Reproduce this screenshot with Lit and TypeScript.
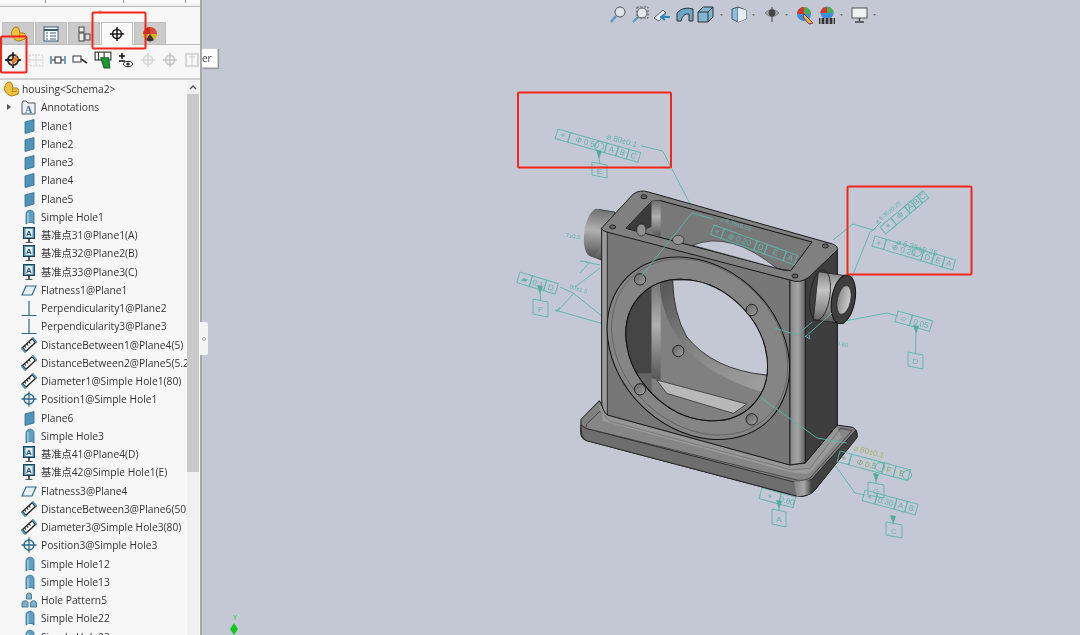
import { LitElement, html, css, svg } from "lit";
import { customElement } from "lit/decorators.js";

type Kind = "plane" | "hole" | "datum" | "flat" | "perp" | "dist" | "pos" | "pattern";

const rows: [Kind, string][] = [
  ["plane", "Plane1"], ["plane", "Plane2"], ["plane", "Plane3"], ["plane", "Plane4"], ["plane", "Plane5"],
  ["hole", "Simple Hole1"],
  ["datum", "基准点31@Plane1(A)"], ["datum", "基准点32@Plane2(B)"], ["datum", "基准点33@Plane3(C)"],
  ["flat", "Flatness1@Plane1"], ["perp", "Perpendicularity1@Plane2"], ["perp", "Perpendicularity3@Plane3"],
  ["dist", "DistanceBetween1@Plane4(5)"], ["dist", "DistanceBetween2@Plane5(5.25)"], ["dist", "Diameter1@Simple Hole1(80)"],
  ["pos", "Position1@Simple Hole1"], ["plane", "Plane6"], ["hole", "Simple Hole3"],
  ["datum", "基准点41@Plane4(D)"], ["datum", "基准点42@Simple Hole1(E)"], ["flat", "Flatness3@Plane4"],
  ["dist", "DistanceBetween3@Plane6(50)"], ["dist", "Diameter3@Simple Hole3(80)"], ["pos", "Position3@Simple Hole3"],
  ["hole", "Simple Hole12"], ["hole", "Simple Hole13"], ["pattern", "Hole Pattern5"], ["hole", "Simple Hole22"], ["hole", "Simple Hole23"],
];

const yellow = svg`<path d="M3 3 C4 1 8 0 9 3 L10 7 L14 7 C16 8 16 11 15 13 L9 15 C6 15 3 12 1.500 9 C1 7 2 5 3 3Z" fill="#f0c040" stroke="#a87c18" stroke-width="1"/><path d="M10 7 L9 11 L14 10" stroke="#b08820" fill="none"/>`;

function kindIcon(k: Kind) {
  const blue = "#4f94b8";
  const dark = "#2f6a8a";
  switch (k) {
    case "plane":
      return svg`<path d="M4 4 L13 1.5 L13 13 L4 15.5Z" fill="${blue}" stroke="${dark}" stroke-width=".8"/>`;
    case "hole":
      return svg`<path d="M5 15 L5 5 C5 0 13 0 13 5 L13 15 L11 13.5 L7 13.5Z" fill="#5f9fc0" stroke="${dark}" stroke-width=".8"/><path d="M7 14 L7 4" stroke="#cfe4ee"/>`;
    case "datum":
      return svg`<rect x="2.5" y=".5" width="11" height="11" fill="#4f94b8" stroke="#23404f"/><rect x="4.5" y="2" width="7" height="8" fill="#e8f0f4"/><text x="8" y="9" class="datum-a">A</text><path d="M8 11.5 L8 15 M4.5 16 L11.5 16" stroke="#222" stroke-width="1.5"/>`;
    case "flat":
      return svg`<path d="M5 4 L15 4 L11 13 L1 13Z" fill="#e6eff4" stroke="${dark}" stroke-width="1.2"/>`;
    case "perp":
      return svg`<path d="M8 1 L8 15 M.5 15.5 L15.5 15.5" stroke="${dark}" stroke-width="1.2" fill="none"/>`;
    case "dist":
      return svg`<g transform="rotate(-42 8 8)"><rect x="1.500" y="5.500" width="13" height="5" fill="#fff" stroke="#222" stroke-width="1.4"/><path d="M4 6 v2 M7 6 v2 M10 6 v2" stroke="#222"/><path d="M0.500 4.500 L0.500 11.500 M15.500 4.500 L15.500 11.500" stroke="${blue}" stroke-width="2"/></g>`;
    case "pos":
      return svg`<circle cx="8" cy="8" r="5" fill="#eaf2f6" stroke="${dark}" stroke-width="1.4"/><path d="M8 .5 L8 15.5 M.5 8 L15.5 8" stroke="${dark}" stroke-width="1.3"/>`;
    case "pattern":
      return svg`<g fill="#7fb0c8" stroke="${dark}" stroke-width=".8"><path d="M5.5 7 L5.5 3 C5.5 .5 10.5 .5 10.5 3 L10.5 7Z"/><path d="M1 15 L1 11 C1 8 7 8 7 11 L7 15Z"/><path d="M9.5 15 L9.5 11 C9.5 8 15.5 8 15.5 11 L15.5 15Z"/></g>`;
  }
}

const line = (pts: string, cls = "t") => svg`<polyline class="${cls}" points="${pts}"/>`;

function frame(x: number, y: number, angle: number, h: number, cells: [number, string][], yellowish = false) {
  let cx = 0;
  return svg`<g transform="translate(${x} ${y}) rotate(${angle})" class="${yellowish ? "yl" : ""}">
    ${cells.map(([w, label]) => {
      const g = svg`<rect class="t" x="${cx}" y="0" width="${w}" height="${h}"/><text class="gd" x="${cx + w / 2}" y="${h - 2.5}">${label}</text>`;
      cx += w;
      return g;
    })}
  </g>`;
}

function datumBox(x: number, y: number, w: number, h: number, label: string, triX?: number, triY?: number) {
  return svg`<g>
    <path class="t" d="M${x} ${y} L${x + w} ${y + 3} L${x + w} ${y + h + 1} L${x} ${y + h - 2}Z"/>
    <text class="gd" x="${x + w / 2}" y="${y + h / 2 + 4}">${label}</text>
    ${triX !== undefined ? svg`<path d="M${triX - 3} ${triY} L${triX + 3} ${(triY as number) + 1} L${triX} ${(triY as number) + 9}Z" fill="#52ab9f"/><path class="t" d="M${triX} ${(triY as number) + 6} L${x + w / 2} ${y + 1}"/>` : ""}
  </g>`;
}

function model() {
  const holes: [number, number][] = [[210, 298], [545, 390], [325, 513], [210, 628], [545, 718]];
  const topHoles: [number, number][] = [[222, 50], [128, 141], [766, 198], [675, 288]];
  return svg`<g transform="translate(570 180) scale(.33333)" stroke-linejoin="round">
    <!-- left boss -->
    <path d="M85 88 L135 96 L100 242 L58 226Z" fill="url(#boss)" stroke="#222" stroke-width="2"/>
    <ellipse cx="72" cy="158" rx="29" ry="72" transform="rotate(8 72 158)" fill="url(#boss)" stroke="none"/>
    <!-- base -->
    <path d="M33 718 L88 662 L112 705 L660 855 L705 850 L800 735 L848 742 Q866 752 860 772 L735 930 Q712 954 678 948 L50 782 Q32 776 32 758Z" fill="#7f7f7f" stroke="#1f1f1f" stroke-width="3"/>
    <path d="M33 735 L48 745 L680 908 L680 948 L50 782 Q32 776 33 735Z" fill="#6e6e6e" stroke="#222" stroke-width="2.5"/>
    <path d="M50 732 L90 694 L120 724 L665 870 L720 865 L812 745 L846 752 L722 892 Q705 904 680 900 L48 745Z" fill="#868686" stroke="#2a2a2a" stroke-width="2"/>
    <path d="M85 668 L112 705 L660 855 L705 850 L800 738 L815 770 L722 878 Q700 884 660 876 L100 724Z" fill="#b4b4b4" opacity=".45"/>
    <path d="M858 750 L725 898 Q705 910 680 906 L680 948 Q712 954 735 930 L862 772 Z" fill="#414141" stroke="#222" stroke-width="2.5"/>
    <path d="M672 905 L722 900 L722 942 L680 950Z" fill="url(#corner)"/>
    <!-- right dark side -->
    <path d="M705 298 L802 208 L802 735 L705 850Z" fill="#3e3e3e" stroke="#111" stroke-width="3"/>
    <!-- front face -->
    <path d="M95 145 L660 300 L660 855 L112 705 Q95 690 95 660Z" fill="#777" stroke="#1a1a1a" stroke-width="3"/>
    <path d="M95 145 L112 155 L112 705 Q95 690 95 660Z" fill="#999" stroke="#1a1a1a" stroke-width="2.5"/>
    <path d="M660 298 L706 298 L706 848 L660 855Z" fill="url(#cornerR)" stroke="#1a1a1a" stroke-width="3"/>
    <!-- top -->
    <path d="M94 145 L190 42 Q210 28 235 36 L788 192 Q806 200 802 210 L716 292 Q690 312 660 300 L110 156Q96 152 94 145Z" fill="#808080" stroke="#1a1a1a" stroke-width="3"/>
    <path d="M168 145 L245 64 L272 62 L726 186 L662 272 L640 270Z" fill="#787878" stroke="#111" stroke-width="3"/>
    <path d="M168 145 L245 64 L245 140 L210 155Z" fill="#3a3a3a"/>
    <path d="M245 64 L272 62 L272 170 L245 158Z" fill="url(#boss)"/>
    <path d="M368 196 Q480 150 622 266 L662 272 L640 270Z" fill="#c4c8d4" stroke="#222" stroke-width="2"/>
    <ellipse cx="214" cy="150" rx="14" ry="18" fill="#8f8f8f" stroke="#222" stroke-width="2"/>
    <ellipse cx="325" cy="180" rx="17" ry="14" fill="#939393" stroke="#222" stroke-width="2"/>
    ${topHoles.map(([x, y]) => svg`<ellipse cx="${x}" cy="${y}" rx="9" ry="6" fill="#666" stroke="#111" stroke-width="2.5"/>`)}
    <!-- ring -->
    <ellipse cx="385" cy="505" rx="302" ry="242" transform="rotate(45 385 505)" fill="#858585" stroke="#111" stroke-width="3"/>
    <ellipse cx="389" cy="501" rx="292" ry="233" transform="rotate(45 389 501)" fill="none" stroke="#444" stroke-width="1.5"/>
    <ellipse cx="380" cy="510" rx="235" ry="187" transform="rotate(45 380 510)" fill="#666" stroke="#111" stroke-width="3"/>
    <!-- inside -->
    <clipPath id="inner"><ellipse cx="380" cy="510" rx="235" ry="187" transform="rotate(45 380 510)"/></clipPath>
    <g clip-path="url(#inner)">
      <rect x="130" y="280" width="120" height="300" fill="#454545"/>
      <rect x="245" y="280" width="360" height="460" fill="#808080"/>
      <path d="M245 300 L272 300 L272 600 L245 595Z" fill="url(#boss)"/>
      <path d="M270 300 L310 300 Q310 500 590 590 L590 640 Q300 560 270 330Z" fill="url(#ringIn)"/>
      <path d="M260 600 L530 672 L490 700 L290 640Z" fill="#b8b8b8" stroke="#222" stroke-width="2"/>
      <path d="M308 300 L620 300 L620 560 L590 585 Q430 570 350 470 Q310 400 308 300Z" fill="#c4c8d4" stroke="#222" stroke-width="2.5"/>
    </g>
    <ellipse cx="380" cy="510" rx="235" ry="187" transform="rotate(45 380 510)" fill="none" stroke="#111" stroke-width="3"/>
    ${holes.map(([x, y]) => svg`<circle cx="${x}" cy="${y}" r="17" fill="url(#hole)" stroke="#111" stroke-width="2.5"/>`)}
    <!-- right boss -->
    <path d="M745 275 L832 288 L822 430 L730 420Z" fill="url(#bossR)" stroke="#222" stroke-width="2.5"/>
    <ellipse cx="750" cy="345" rx="30" ry="76" transform="rotate(8 750 345)" fill="none" stroke="#222" stroke-width="2.5"/>
    <ellipse cx="820" cy="358" rx="35" ry="74" transform="rotate(10 820 358)" fill="#3e3e3e" stroke="#111" stroke-width="3"/>
    <ellipse cx="822" cy="360" rx="20" ry="44" transform="rotate(12 822 360)" fill="url(#bore)" stroke="#222" stroke-width="2"/>
  </g>`;
}

function annotations() {
  return svg`
    ${line("640.7,145.7 662.7,151 688,200 700,222")}
    ${frame(558, 129, 16, 10, [[13, "⌖"], [38, "Φ 0.50"], [12, "A"], [11, "B"], [12, "C"]])}
    <circle class="t" cx="599" cy="146" r="4.5"/>
    <text class="gd" x="621" y="143" transform="rotate(16 621 143)">⌀ 80±0.1</text>
    ${datumBox(592, 162, 15, 15, "E", 599, 150)}

    ${line("833,240 853,224 873,230 881,222")}
    ${line("850,282 870,232 876,228")}
    ${frame(875, 236, 16.6, 10.5, [[12, "⌖"], [39, "⊕ 0.20"], [11, "D"], [11, "E"], [11, "A"]])}
    <circle class="t" cx="917" cy="252" r="4.5"/>
    <text class="gd" x="916" y="250" transform="rotate(16.6 916 250)">⌀ 6.35±0.25</text>
    ${frame(880, 227, -40, 9, [[14, "⌖"], [18, "Φ"], [8, "A"], [8, "B"], [8, "C"]])}
    <text class="gd tiny" x="889" y="214" transform="rotate(-40 889 214)">⌀ 6.35±0.25</text>

    ${line("845,321 887,313 898,316")}
    ${frame(898, 311, 16, 11, [[15, "▱"], [21, "0.05"]])}
    ${datumBox(908, 352, 15, 16, "D", 916, 325)}
    ${line("805,338 827,342")}
    <text class="gd tiny" x="840" y="346" transform="rotate(10 840 346)">⌀0.60</text>

    ${frame(520, 272, 17, 11, [[13, "▰"], [15, "0.1"], [12, "D"]])}
    ${datumBox(533, 299, 15, 17, "F", 540, 285)}
    ${line("560,287 573,293 617,328")}
    ${line("555,310 607,325")}
    ${line("557,312 574,293")}
    ${line("580,273 590,262")}
    ${line("585,262 600,265")}
    ${line("575,287 600,268")}
    <path d="M580 261 l8 1 M556 312 l4 -5" class="t"/>
    <text class="gd tiny" x="578" y="291" transform="rotate(17 578 291)">80±1.5</text>
    <text class="gd tiny" x="572" y="238" transform="rotate(8 572 238)">.7±0.5</text>

    ${frame(762, 488, 15, 11, [[20, "⌖"], [15, "0.80"]])}
    ${datumBox(772, 509, 14, 17, "A", 779, 500)}
  `;
}

function overModel() {
  return svg`
    ${line("642,275 692,213 713,219")}
    ${frame(714, 225, 20, 10, [[11, "⌖"], [35, "⊕ 0.20"], [11, "D"], [20, "E"], [12, "A"]])}
    <text class="gd tiny" x="735" y="226" transform="rotate(18 735 226)">⌀ 6.35±0.25</text>
    ${line("775,328 797,335 812,322")}
    ${line("805,337 832,313")}
    ${line("760,397 817,438 847,443")}
    <path class="t" d="M805 336 l5 3 l-1 -4"/>

    ${frame(840, 451, 15, 11, [[12, "⌖"], [34, "Φ 0.5"], [12, "F"], [15, "E"]], true)}
    <circle class="t" cx="880" cy="467" r="4.5"/><circle class="t" cx="907" cy="475" r="4.5"/>
    <text class="gd yt" x="868" y="454" transform="rotate(15 868 454)">⌀ 80±0.1</text>
    ${datumBox(868, 482, 16, 15, "G", 876, 473)}
    ${line("835,465 855,493 865,495")}
    ${frame(865, 490, 15, 11, [[13, "⌖"], [20, "0.30"], [11, "A"], [11, "B"]])}
    ${datumBox(886, 522, 16, 15, "C", 893, 515)}
  `;
}

@customElement("app-root")
export class AppRoot extends LitElement {
  static styles = css`
    :host { display: block; width: 1080px; height: 635px; overflow: hidden; position: relative; font-family: "Open Sans", "Noto Sans CJK SC", sans-serif; color: #333; }
    .shot { width: 1080px; height: 635px; position: relative; filter: blur(.3px); }
    .page { display: flex; width: 1080px; height: 635px; }
    .panel { width: 200px; flex: none; background: #f7f7f7; border-right: 2px solid #a9a9a9; display: flex; flex-direction: column; box-sizing: content-box; position: relative; z-index: 2; }
    .strip { height: 6px; border-bottom: 1px solid #b9b9b9; background: linear-gradient(#fff, #efefef); display: flex; }
    .strip span { flex: none; border-right: 1px solid #9c9c9c; height: 3px; }
    .strip .a { width: 45px; }
    .strip .b { width: 77px; }
    .strip .c { width: 61px; }
    .handle { height: 15px; display: flex; justify-content: center; align-items: flex-start; padding-top: 3px; box-sizing: border-box; }
    .handle i { width: 4px; height: 4px; border-radius: 50%; background: #c8c8c8; }
    .tabs { display: flex; gap: 1px; height: 22px; padding-left: 2px; border-bottom: 1px solid #bbb; }
    .tab { width: 32px; height: 22px; background: #cbcbcb; display: flex; align-items: center; justify-content: center; border: 1px solid #bdbdbd; border-bottom: 0; box-sizing: border-box; }
    .tab.on { background: #fafafa; height: 23px; z-index: 1; }
    .tools { height: 35px; display: flex; align-items: center; padding: 0 0 4px 2px; gap: 0; border-bottom: 2px solid #d2d2d2; box-sizing: border-box; }
    .tool { width: 22.4px; height: 22px; display: flex; align-items: center; justify-content: center; flex: none; }
    .tree { flex: 1; display: flex; min-height: 0; overflow: hidden; }
    .list { width: 187px; flex: none; overflow: hidden; }
    .scroll { width: 12px; background: #f0f0f0; display: flex; flex-direction: column; }
    .up { height: 14px; display: flex; align-items: center; justify-content: center; }
    .thumb { height: 378px; background: #c9c9c9; }
    .row { height: 18.25px; display: flex; align-items: center; white-space: nowrap; font-size: 10.25px; line-height: 18px; color: #333; }
    .ic { width: 16px; height: 16px; flex: none; margin-left: 21px; margin-right: 4px; }
    .row.root .ic { margin-left: 3px; margin-right: 3px; }
    .arrow { width: 0; height: 0; border-left: 4px solid #555; border-top: 3.5px solid transparent; border-bottom: 3.5px solid transparent; margin-left: 7px; margin-right: -11px; flex: none; }
    .grip { position: absolute; left: 200px; top: 322px; width: 8px; height: 33px; background: #f4f4f4; border-radius: 0 2px 2px 0; display: flex; align-items: center; justify-content: center; }
    .grip i { width: 4px; height: 4px; border-radius: 50%; border: 1px solid #aaa; box-sizing: border-box; }
    .tip { position: absolute; left: 202px; top: 48px; width: 16px; height: 20px; background: #fff; border: 1px solid #ccc; border-left: 0; box-sizing: border-box; font-size: 10px; display: flex; align-items: center; color: #444; box-shadow: 1px 1px 1px #999; }
    .view { flex: 1; background: #c4c8d4; position: relative; min-width: 0; }
    .view svg.canvas { position: absolute; inset: 0; width: 100%; height: 100%; }
    .marks { position: absolute; left: 0; top: 0; pointer-events: none; z-index: 3; }
    .t { fill: none; stroke: #5bb5aa; stroke-width: 1; opacity: .9; }
    .gd { font: 8px "Liberation Sans", sans-serif; fill: #62b2aa; text-anchor: middle; }
    .tiny { font-size: 6px; }
    .yt { fill: #a8b06a; }
    .yl .gd { fill: #7fa870; }
    .datum-a { font: bold 8px "Liberation Sans", sans-serif; fill: #23506a; text-anchor: middle; }
    .annot { font: bold 10px "Liberation Serif", serif; fill: #3d6fa8; text-anchor: middle; }
    .red { fill: none; stroke: #f3261a; stroke-width: 2; }
    .axis { font: 7px "Liberation Sans", sans-serif; fill: #39d24a; text-anchor: middle; }
  `;

  private ic(inner: unknown, w = 16, h = 16, vb = "0 0 16 16") {
    return html`<svg width="${w}" height="${h}" viewBox="${vb}" fill="none">${inner}</svg>`;
  }

  render() {
    const target = (c: string) => svg`<circle cx="8" cy="8" r="4.5" stroke="${c}" stroke-width="1.6"/><path d="M8 1 V15 M1 8 H15" stroke="${c}" stroke-width="1.6"/>`;
    return html`
      <div class="shot">
      <div class="page">
        <div class="panel">
          <div class="strip"><span class="a"></span><span class="b"></span><span class="c"></span></div>
          <div class="handle"><i></i></div>
          <div class="tabs">
            <div class="tab">${this.ic(yellow)}</div>
            <div class="tab">${this.ic(svg`<rect x="1" y="1" width="14" height="14" fill="#fff" stroke="#355a7a"/><path d="M1 4 H15" stroke="#355a7a" stroke-width="2"/><path d="M3 7 H5 M7 7 H13 M3 10 H5 M7 10 H13 M3 13 H5 M7 13 H13" stroke="#355a7a"/>`)}</div>
            <div class="tab">${this.ic(svg`<rect x="3" y="1" width="5" height="5" fill="#eee" stroke="#444"/><rect x="3" y="7" width="5" height="8" fill="#eee" stroke="#444"/><rect x="9" y="8" width="5" height="6" fill="#ddd" stroke="#444"/>`)}</div>
            <div class="tab on">${this.ic(target("#1e1e1e"))}</div>
            <div class="tab">${this.ic(svg`<circle cx="8" cy="8" r="7" fill="#d9b020"/><path d="M8 1 A7 7 0 0 0 1 8 L8 8Z" fill="#c42a20"/><path d="M8 8 L4 14 A7 7 0 0 0 12 14Z" fill="#333"/><path d="M8 1 A7 7 0 0 1 15 8 L8 8Z" fill="#d34d3a"/>`)}</div>
          </div>
          <div class="tools">
            <div class="tool">${this.ic(svg`<circle cx="8" cy="8" r="4.5" stroke="#222" stroke-width="1.8"/><path d="M8 1 V15 M1 8 H15" stroke="#222" stroke-width="1.6"/><path d="M5 11 L12 2 L11 6.500 L14 6 L7 13 L7.500 9Z" fill="#e8822a"/>`, 18, 18)}</div>
            <div class="tool">${this.ic(svg`<rect x="1" y="3" width="14" height="11" stroke="#cfcfcf" stroke-dasharray="2 1"/><path d="M8 3 V14 M1 8 H15" stroke="#d5d5d5"/>`)}</div>
            <div class="tool">${this.ic(svg`<path d="M1 4 V12 M15 4 V12" stroke="#2f7fb0" stroke-width="1.4"/><path d="M2 8 H14" stroke="#222"/><rect x="5" y="5" width="6" height="6" fill="#fff" stroke="#222"/>`)}</div>
            <div class="tool">${this.ic(svg`<rect x="1" y="4" width="8" height="6" fill="#fff" stroke="#333"/><path d="M9 7 L15 11" stroke="#333" stroke-width="1.6"/>`)}</div>
            <div class="tool">${this.ic(svg`<rect x="1" y="1" width="14" height="7" fill="#fff" stroke="#333"/><path d="M4 1 V8 M9 1 V8" stroke="#333"/><path d="M6 6 L13 6 L14 15 L9 15Z" fill="#1e9a35" stroke="#126622"/>`, 18, 18)}</div>
            <div class="tool">${this.ic(svg`<path d="M5 1 V7 M2 4 H8 M2 9 H8" stroke="#111" stroke-width="1.6"/><ellipse cx="11" cy="12" rx="4.5" ry="2.6" fill="#fff" stroke="#222"/><circle cx="11" cy="12" r="1.6" fill="#222"/>`)}</div>
            <div class="tool">${this.ic(target("#d6d6d6"))}</div>
            <div class="tool">${this.ic(target("#c4c4c4"))}</div>
            <div class="tool">${this.ic(svg`<rect x="2" y="2" width="12" height="12" stroke="#c8c8c8" stroke-width="1.4"/><path d="M8 2 V14 M5 5 H11" stroke="#d0d0d0"/>`)}</div>
          </div>
          <div class="tree">
            <div class="list">
              <div class="row root"><svg class="ic" viewBox="0 0 16 16" fill="none">${yellow}</svg>housing&lt;Schema2&gt;</div>
              <div class="row"><span class="arrow"></span><svg class="ic" viewBox="0 0 16 16" fill="none"><path d="M1 4 L1 15 L14 15 L14 4 L7 4 L5 2 L2 2Z" fill="#eef2f5" stroke="#556"/><text x="7.5" y="13.5" class="annot">A</text></svg>Annotations</div>
              ${rows.map(([k, t]) => html`<div class="row"><svg class="ic" viewBox="0 0 16 16" fill="none">${kindIcon(k)}</svg>${t}</div>`)}
            </div>
            <div class="scroll">
              <div class="up">${this.ic(svg`<path d="M2 6 L5 3 L8 6" stroke="#555" stroke-width="1.4"/>`, 10, 8, "0 0 10 8")}</div>
              <div class="thumb"></div>
            </div>
          </div>
          <div class="grip"><i></i></div>
          <div class="tip">er</div>
        </div>
        <div class="view">
          <svg class="canvas" viewBox="202 0 878 635">
            <defs>
              <linearGradient id="boss" x1="0" y1="0" x2="0" y2="1"><stop offset="0" stop-color="#707070"/><stop offset=".45" stop-color="#b0b0b0"/><stop offset="1" stop-color="#555"/></linearGradient>
              <linearGradient id="bossR" x1="0" y1="0" x2="0" y2="1"><stop offset="0" stop-color="#858585"/><stop offset=".35" stop-color="#c4c4c4"/><stop offset=".75" stop-color="#8c8c8c"/><stop offset="1" stop-color="#555"/></linearGradient>
              <linearGradient id="bore" x1="0" y1="0" x2="1" y2="0"><stop offset="0" stop-color="#8a8a8a"/><stop offset="1" stop-color="#d0d0d0"/></linearGradient>
              <linearGradient id="corner" x1="0" y1="0" x2="1" y2="0"><stop offset="0" stop-color="#868686"/><stop offset=".6" stop-color="#a8a8a8"/><stop offset="1" stop-color="#505050"/></linearGradient>
              <linearGradient id="cornerR" x1="0" y1="0" x2="1" y2="0"><stop offset="0" stop-color="#878787"/><stop offset=".5" stop-color="#a4a4a4"/><stop offset="1" stop-color="#626262"/></linearGradient>
              <linearGradient id="ringIn" x1="0" y1="0" x2="1" y2="1"><stop offset="0" stop-color="#555"/><stop offset=".5" stop-color="#888"/><stop offset="1" stop-color="#a0a0a0"/></linearGradient>
              <linearGradient id="hole" x1="0" y1="0" x2="1" y2="1"><stop offset="0" stop-color="#626262"/><stop offset="1" stop-color="#a0a0a0"/></linearGradient>
            </defs>

            <g transform="translate(610 7)" fill="none">
              <circle cx="10" cy="5" r="5" fill="#dfe6ea" stroke="#555"/><path d="M6 9 L1 15" stroke="#5a9cc5" stroke-width="2.4"/>
              <circle cx="32" cy="6" r="5" fill="#e2e8ec" stroke="#666"/><path d="M28 10 L23 15" stroke="#5a9cc5" stroke-width="2.4"/><rect x="27" y="0" width="11" height="11" stroke="#555" stroke-dasharray="2 1.5"/>
              <path d="M44 11 L53 3 L56 6 L49 14Z" fill="#eee" stroke="#666"/><path d="M60 10 H52 M55 7 L51 10 L55 13" stroke="#2e86c0" stroke-width="2"/>
              <path d="M67 6 Q73 -1 83 2 L83 14 L79 14 L79 7 Q73 6 71 14 L67 14Z" fill="#6aa7c9" stroke="#333"/>
              <path d="M88 5 L93 0 L103 0 L103 10 L98 15 L88 15Z" fill="#7fb5d2" stroke="#333"/><path d="M88 5 H98 V15 M98 5 L103 0" stroke="#333"/>
              <path d="M122 2 L128 0 L136 3 L136 12 L128 15 L122 12Z" fill="#8fc0d8" stroke="#456"/><path d="M128 0 L128 15" stroke="#456"/><path d="M128 1 L136 3 L136 12 L128 15Z" fill="#e6eef2"/>
              <path d="M155 6 Q162 -1 169 6 Q162 13 155 6Z" fill="#aab0b6" stroke="#777"/><circle cx="162" cy="6" r="3.4" fill="#444"/><path d="M162 0 V15" stroke="#444"/>
              <circle cx="194" cy="7" r="7" fill="#3d8edc"/><path d="M194 0 A7 7 0 0 1 201 7 L194 7Z" fill="#4caf50"/><path d="M187 7 A7 7 0 0 1 194 0 L194 7Z" fill="#d9352b"/><path d="M194 7 L203 16 L199 17 L193 10Z" fill="#e8b830" stroke="#735"/>
              <circle cx="217" cy="6" r="6.5" fill="#3d8edc"/><path d="M217 0 A6 6 0 0 1 223.5 6 L217 6Z" fill="#4caf50"/><path d="M210.5 6 A6 6 0 0 1 217 0 L217 6Z" fill="#d9352b"/><rect x="209" y="11" width="16" height="6" fill="#333"/><path d="M211 11 v6 M215 11 v6 M219 11 v6 M223 11 v6" stroke="#eee"/>
              <rect x="242" y="1" width="15" height="10" fill="#eef2f4" stroke="#555"/><path d="M249.500 11 V14 M245 15 H254" stroke="#444" stroke-width="1.4"/>
              <path d="M110 7 h3 l-1.500 2Z M142 7 h3 l-1.500 2Z M175 7 h3 l-1.500 2Z M230 7 h3 l-1.500 2Z M263 7 h3 l-1.500 2Z" fill="#777"/>
            </g>

            ${annotations()}
            ${model()}
            ${overModel()}

            <text class="axis" x="235" y="620">Y</text>
            <path d="M234 623 L238 629 L234 635 L230 629Z" fill="#12c81e"/>

            <rect class="red" x="518" y="92.500" width="153" height="75" rx="1"/>
            <rect class="red" x="847.500" y="186.500" width="124" height="88" rx="1"/>
          </svg>
        </div>
      </div>
      <svg class="marks" width="200" height="80" fill="none">
        <rect class="red" x="92.500" y="12.500" width="53" height="36" rx="1"/>
        <rect class="red" x="1" y="36.500" width="25.500" height="36" rx="1"/>
      </svg>
      </div>
    `;
  }
}
